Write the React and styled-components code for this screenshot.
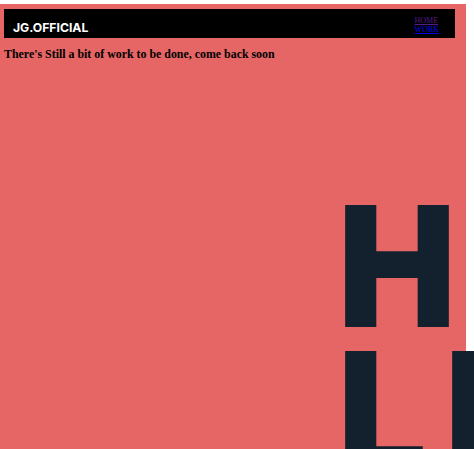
import React from 'react';
import styled, { createGlobalStyle } from 'styled-components';

const GlobalStyle = createGlobalStyle`
	html, body {
		margin: 0;
		padding: 0;
		background: #fff;
		overflow: hidden;
	}
	body {
		padding-top: 4px;
		font-family: "Liberation Serif", "Times New Roman", serif;
	}
`;

const Page = styled.div`
	width: 466px;
	height: 445px;
	box-sizing: border-box;
	padding: 5px 11px 0 4px;
	background: #e66565;
	display: flex;
	flex-direction: column;
`;

const Header = styled.header`
	height: 29px;
	flex-shrink: 0;
	background: #000;
	display: flex;
	justify-content: space-between;
	align-items: center;
	padding: 0 16px 0 9px;
`;

const Logo = styled.div`
	font-family: Inter, "Liberation Sans", sans-serif;
	font-weight: 700;
	font-size: 12.2px;
	color: #fff;
	padding-top: 7px;
`;

const Nav = styled.nav`
	display: flex;
	flex-direction: column;
	font-size: 8px;
	line-height: 9px;
	padding-top: 2px;
`;

const NavLink = styled.a`
	color: ${(p) => (p.$visited ? '#551a8b' : '#0000ee')};
	text-decoration: underline;
`;

const Heading = styled.h3`
	margin: 9px 0 0;
	font-size: 11.9px;
	font-weight: bold;
	color: #000;
`;

const BigType = styled.div`
	margin: 131px 0 0 333px;
	font-family: Inter, "Liberation Sans", sans-serif;
	font-weight: 900;
	font-size: 168px;
	line-height: 146px;
	letter-spacing: 19px;
	color: #13202e;
	white-space: nowrap;
	transform: scaleX(0.94);
	transform-origin: 12px 0;
`;

export default function App() {
	return (
		<>
			<GlobalStyle />
			<Page>
				<Header>
					<Logo>JG.OFFICIAL</Logo>
					<Nav>
						<NavLink href="#" $visited>HOME</NavLink>
						<NavLink href="#">WORK</NavLink>
					</Nav>
				</Header>
				<Heading>There's Still a bit of work to be done, come back soon</Heading>
				<BigType>
					H
					<br />
					LL
				</BigType>
			</Page>
		</>
	);
}
